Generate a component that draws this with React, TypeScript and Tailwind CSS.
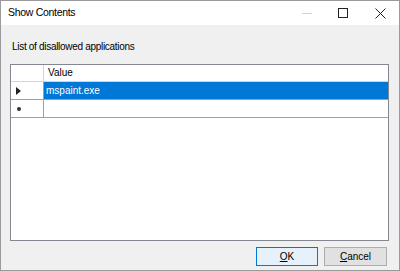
import React from 'react';

const font = { fontFamily: '"Segoe UI", "Liberation Sans", Arial, sans-serif' };

export default function App() {
  return (
    <div
      className="w-[400px] h-[271px] flex flex-col bg-[#f0f0f0] border border-[#9a9a9a] text-black overflow-hidden"
      style={font}
    >
      {/* Title bar */}
      <div className="h-[24px] bg-white flex items-center shrink-0">
        <span className="pl-[7px] text-[10.5px] tracking-[-0.3px] flex-1">Show Contents</span>
        <div className="flex items-center h-full">
          <div className="w-[36px] h-full flex items-center justify-center">
            <div className="w-[10px] h-px bg-[#d0d0d0]" />
          </div>
          <div className="w-[36px] h-full flex items-center justify-center">
            <div className="w-[10px] h-[10px] border border-[#222]" />
          </div>
          <div className="w-[38px] h-full flex items-center justify-center">
            <svg width="11" height="11" viewBox="0 0 11 11">
              <path d="M0.5 0.5 L10.5 10.5 M10.5 0.5 L0.5 10.5" stroke="#222" strokeWidth="1" />
            </svg>
          </div>
        </div>
      </div>

      {/* Body */}
      <div className="flex-1 flex flex-col px-[9px] pt-[15px] pb-[4px]">
        <div className="text-[10px] tracking-[-0.3px] pl-[2px] leading-[14px]">List of disallowed applications</div>

        <div className="mt-[10px] h-[177px] mr-[1px] bg-white border border-[#828790] text-[10px]">
          {/* header */}
          <div className="flex h-[17px] border-b border-[#d5d5d5]">
            <div className="w-[33px] border-r border-[#d5d5d5]" />
            <div className="flex-1 pl-[4px] leading-[16px]">Value</div>
          </div>
          {/* selected row */}
          <div className="flex h-[18px] border-b border-[#a0a0a0]">
            <div className="w-[33px] border-r border-[#a0a0a0] flex items-center pl-[5px]">
              <svg width="5" height="8" viewBox="0 0 5 8">
                <path d="M0 0 L5 4 L0 8 Z" fill="#222" />
              </svg>
            </div>
            <div className="flex-1 bg-[#0078d7] text-white pl-[2px] leading-[17px]">mspaint.exe</div>
          </div>
          {/* new row */}
          <div className="flex h-[18px] border-b border-[#a0a0a0]">
            <div className="w-[33px] border-r border-[#a0a0a0] flex items-center pl-[6px]">
              <div className="w-[4px] h-[4px] rounded-full bg-[#333]" />
            </div>
            <div className="flex-1" />
          </div>
        </div>

        <div className="flex justify-end gap-[6px] mt-[6px] pr-[3px]">
          <button className="w-[62px] h-[19px] bg-[#e5f1fb] border border-[#0078d7] text-[10px] leading-[16px]">
            <span className="underline">O</span>K
          </button>
          <button className="w-[63px] h-[19px] bg-[#e1e1e1] border border-[#adadad] text-[10px] leading-[16px]">
            <span className="underline">C</span>ancel
          </button>
        </div>
      </div>
    </div>
  );
}
